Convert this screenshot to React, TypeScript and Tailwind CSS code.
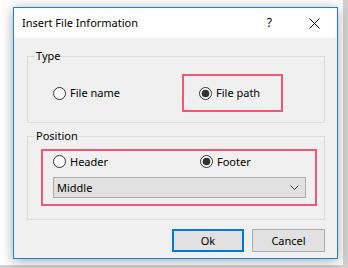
import React from "react";

function Radio({ checked }: { checked?: boolean }) {
  return (
    <svg width="13" height="13" viewBox="0 0 13 13" className="shrink-0">
      <circle cx="6.5" cy="6.5" r="6" fill="#ffffff" stroke="#333333" strokeWidth="1" />
      {checked && <circle cx="6.5" cy="6.5" r="3.8" fill="#333333" />}
    </svg>
  );
}

function RadioItem({ label, checked, className }: { label: string; checked?: boolean; className?: string }) {
  return (
    <div className={"flex items-center gap-[4px] " + (className ?? "")}>
      <Radio checked={checked} />
      <span className="leading-[16px]">{label}</span>
    </div>
  );
}

export default function App() {
  return (
    <div
      className="w-[348px] h-[268px] bg-[#d0d0d0] overflow-hidden text-[11px] text-black"
      style={{ fontFamily: '"Noto Sans", "Segoe UI", sans-serif' }}
    >
      <div className="w-[343px] h-[265px] bg-white pl-[13px] pt-[7px]">
        <div className="w-[325px] h-[252px] border border-[#1883d7] bg-[#f0f0f0] shadow-[0_2px_12px_rgba(0,0,0,0.35)] flex flex-col">
          {/* Title bar */}
          <div className="h-[30px] bg-white flex items-center pl-[8px] pr-[17px] shrink-0">
            <span className="leading-[16px]">Insert File Information</span>
            <div className="flex-1" />
            <span className="leading-[16px] text-[12px]">?</span>
            <svg width="11" height="11" viewBox="0 0 11 11" className="ml-[37px]">
              <path d="M0.5 0.5 L10.5 10.5 M10.5 0.5 L0.5 10.5" stroke="#000" strokeWidth="1" />
            </svg>
          </div>

          {/* Body */}
          <div className="flex flex-col">
            {/* Type group */}
            <div className="relative mt-[18px] ml-[13px] w-[298px] h-[67px] border border-[#dcdcdc]">
              <span className="absolute left-[7px] top-[-9px] px-[1px] bg-[#f0f0f0] leading-[16px]">Type</span>
              <div className="flex items-center mt-[17px] pl-[25px]">
                <RadioItem label="File name" className="w-[129px]" />
                <div className="w-[101px] h-[38px] border-2 border-[#f0587a] flex items-center pl-[15px]">
                  <RadioItem label="File path" checked />
                </div>
              </div>
            </div>

            {/* Position group */}
            <div className="relative mt-[13px] ml-[13px] w-[298px] h-[84px] border border-[#dcdcdc]">
              <span className="absolute left-[7px] top-[-9px] px-[1px] bg-[#f0f0f0] leading-[16px]">Position</span>
              <div className="mt-[12px] ml-[13px] w-[276px] h-[57px] border-2 border-[#f0587a] flex flex-col pl-[10px]">
                <div className="flex items-center h-[21px]">
                  <RadioItem label="Header" className="w-[147px]" />
                  <RadioItem label="Footer" checked />
                </div>
                <div className="mt-[5px] w-[253px] h-[21px] bg-[#e1e1e1] border border-[#adadad] flex items-center pl-[3px] pr-[6px]">
                  <span className="flex-1 leading-[16px]">Middle</span>
                  <svg width="9" height="5" viewBox="0 0 9 5">
                    <path d="M0.5 0.5 L4.5 4.5 L8.5 0.5" stroke="#333" strokeWidth="1" fill="none" />
                  </svg>
                </div>
              </div>
            </div>

            {/* Buttons */}
            <div className="flex justify-end gap-[8px] mt-[9px] pr-[12px]">
              <button className="w-[72px] h-[23px] bg-[#e1e1e1] border-2 border-[#0078d7] flex items-center justify-center leading-[16px]">
                Ok
              </button>
              <button className="w-[73px] h-[23px] bg-[#e1e1e1] border border-[#adadad] flex items-center justify-center leading-[16px]">
                Cancel
              </button>
            </div>
          </div>
        </div>
      </div>
    </div>
  );
}
